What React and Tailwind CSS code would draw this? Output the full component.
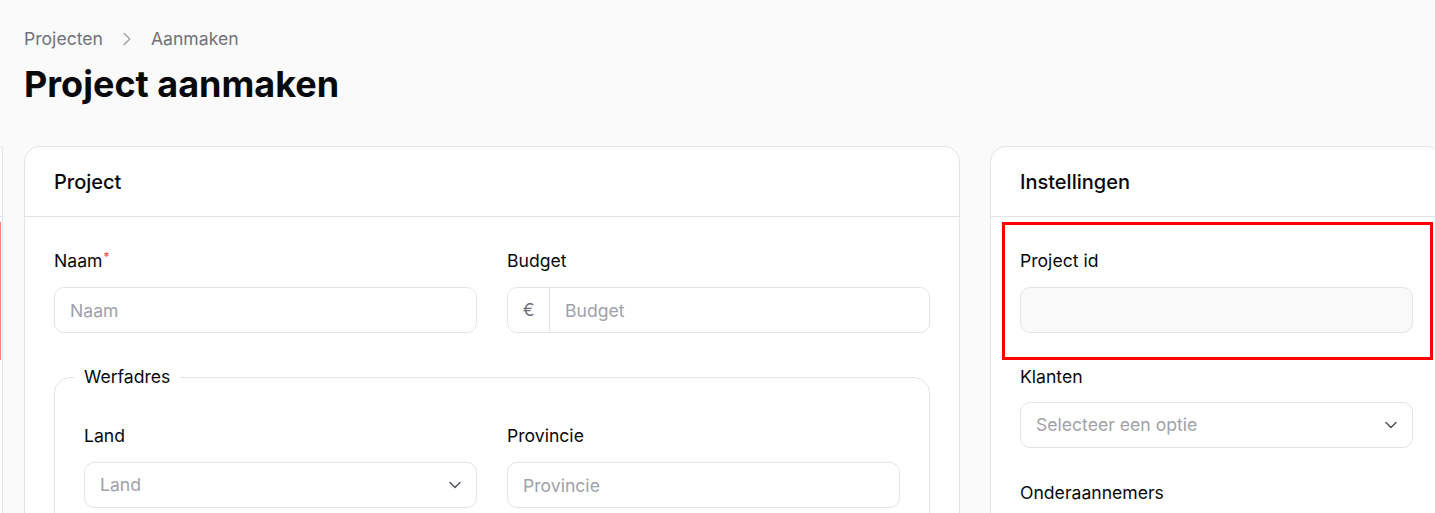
import { ChevronDown, ChevronRight } from "lucide-react";

const labelCls = "block text-[17.6px] leading-6 text-[#09090b]";
const inputCls =
  "h-[46px] w-full rounded-[10px] border border-[#e4e4e7] bg-white px-[15px] text-[17.6px] text-[#09090b] outline-none placeholder:text-[#a1a1aa]";

function Field({ label, required, children, className = "" }) {
  return (
    <div className={className}>
      <label className={`${labelCls} mb-[14px]`}>
        {label}
        {required && (
          <sup className="ml-[1px] text-[12px] text-[#ef4444]">*</sup>
        )}
      </label>
      {children}
    </div>
  );
}

function SelectBox({ placeholder }) {
  return (
    <div className="flex h-[46px] w-full items-center justify-between rounded-[10px] border border-[#e4e4e7] bg-white pl-[15px] pr-[11px]">
      <span className="text-[17.6px] text-[#a1a1aa]">{placeholder}</span>
      <ChevronDown size={20} strokeWidth={1.75} className="text-[#52525b]" />
    </div>
  );
}

function CardHeader({ title }) {
  return (
    <div className="flex h-[70px] items-center border-b border-[#e4e4e7] px-[29px]">
      <h2 className="text-[20px] font-medium text-[#09090b]">{title}</h2>
    </div>
  );
}

export default function App() {
  return (
    <div className="h-screen w-full overflow-hidden bg-[#fafafa] font-['Inter','Liberation_Sans',sans-serif]">
      <div className="w-[1467px] px-6 pt-[27px]">
        {/* Breadcrumb */}
        <nav className="flex items-center gap-[13px] text-[17.6px] leading-6 text-[#71717a]">
          <span>Projecten</span>
          <ChevronRight size={22} strokeWidth={1.6} className="text-[#a1a1aa]" />
          <span>Aanmaken</span>
        </nav>
        <h1 className="mt-[13px] text-[36px] font-bold leading-[40px] text-[#09090b]">
          Project aanmaken
        </h1>

        <div className="-ml-6 mt-[42px] flex items-start">
          {/* cut-off panel at the left edge */}
          <div className="mr-[21px] flex w-[3px] shrink-0 flex-col">
            <div className="h-[71px] rounded-tr-[16px] border-r border-t border-b border-[#e4e4e7] bg-white" />
            <div className="flex h-[300px] border-r border-[#e4e4e7] bg-white pt-[5px]">
              <div className="h-[138px] w-px bg-[#ff8080]" />
            </div>
          </div>

          <div className="grid w-[1419px] grid-cols-3 gap-[30px]">
            {/* Project card */}
            <div className="col-span-2 h-[400px] rounded-[16px] border border-[#e4e4e7] bg-white">
              <CardHeader title="Project" />
              <div className="px-[29px] pt-[32px]">
                <div className="grid grid-cols-2 gap-[30px]">
                  <Field label="Naam" required>
                    <input className={inputCls} placeholder="Naam" />
                  </Field>
                  <Field label="Budget">
                    <div className="flex h-[46px] w-full items-center rounded-[10px] border border-[#e4e4e7] bg-white">
                      <span className="flex h-full w-[42px] items-center justify-center border-r border-[#e4e4e7] text-[17.6px] text-[#71717a]">
                        €
                      </span>
                      <input
                        className="h-full min-w-0 flex-1 rounded-r-[10px] bg-transparent px-[15px] text-[17.6px] outline-none placeholder:text-[#a1a1aa]"
                        placeholder="Budget"
                      />
                    </div>
                  </Field>
                </div>

                <fieldset className="mt-[32px] rounded-[16px] border border-[#e4e4e7] px-[29px] pt-[35px] pb-[30px]">
                  <legend className="-ml-[10px] px-[10px] text-[17.6px] leading-6 text-[#09090b]">
                    Werfadres
                  </legend>
                  <div className="grid grid-cols-2 gap-[30px]">
                    <Field label="Land">
                      <SelectBox placeholder="Land" />
                    </Field>
                    <Field label="Provincie">
                      <input className={inputCls} placeholder="Provincie" />
                    </Field>
                  </div>
                </fieldset>
              </div>
            </div>

            {/* Instellingen card */}
            <div className="h-[400px] rounded-[16px] border border-[#e4e4e7] bg-white">
              <CardHeader title="Instellingen" />
              <div className="px-[29px] pt-[5px]">
                <div className="-ml-[18px] -mr-[20px] border-[3px] border-[#ff0000] pb-[24px] pl-[15px] pr-[17px] pt-[24px]">
                  <Field label="Project id">
                    <div className="h-[46px] w-full rounded-[10px] border border-[#e4e4e7] bg-[#f9f9f9]" />
                  </Field>
                </div>
                <div className="mt-[5px]">
                  <label className={`${labelCls} mb-[13px]`}>Klanten</label>
                  <SelectBox placeholder="Selecteer een optie" />
                </div>
                <label className={`${labelCls} mt-[33px]`}>Onderaannemers</label>
              </div>
            </div>
          </div>
        </div>
      </div>
    </div>
  );
}
